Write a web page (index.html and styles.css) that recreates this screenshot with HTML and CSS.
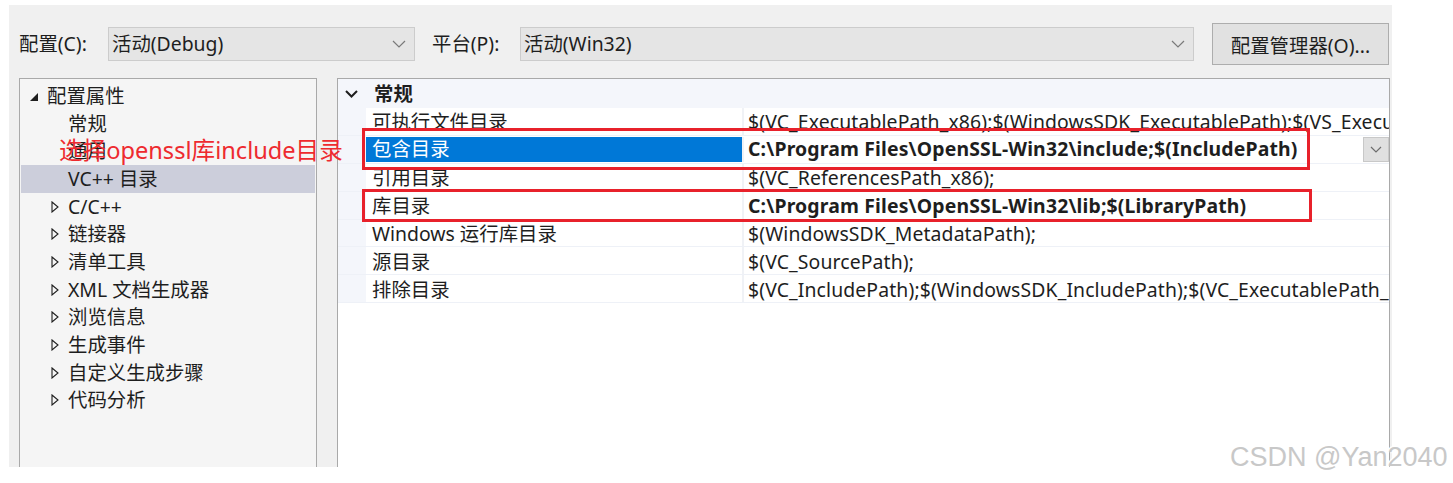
FILE: index.html
```html
<!DOCTYPE html>
<html lang="zh-CN">
<head>
<meta charset="utf-8">
<title>属性页</title>
<link rel="stylesheet" href="styles.css">
</head>
<body>
<div class="window">
  <div class="toolbar">
    <span class="tb-label tb-label-1">配置(C):</span>
    <div class="combo combo-1">
      <span class="combo-text">活动(Debug)</span>
      <svg class="chev" width="14" height="8" viewBox="0 0 14 8"><polyline points="1,1 7,7 13,1" fill="none" stroke="#7a7a7a" stroke-width="1.2"/></svg>
    </div>
    <span class="tb-label tb-label-2">平台(P):</span>
    <div class="combo combo-2">
      <span class="combo-text">活动(Win32)</span>
      <svg class="chev" width="14" height="8" viewBox="0 0 14 8"><polyline points="1,1 7,7 13,1" fill="none" stroke="#7a7a7a" stroke-width="1.2"/></svg>
    </div>
    <button class="btn">配置管理器(O)...</button>
  </div>

  <div class="panels">
    <div class="tree">
      <div class="tree-row lvl0">
        <svg class="tri" width="8" height="8" viewBox="0 0 8 8"><polygon points="0,8 8,8 8,0" fill="#1e1e1e"/></svg>
        <span>配置属性</span>
      </div>
      <div class="tree-row leaf"><span>常规</span></div>
      <div class="tree-row leaf"><span>通用</span></div>
      <div class="tree-row leaf selected"><span>VC++ 目录</span></div>
      <div class="tree-row exp"><svg class="tri-o" width="8" height="12" viewBox="0 0 8 12"><polygon points="1,1 7,6 1,11" fill="none" stroke="#1e1e1e" stroke-width="1.1"/></svg><span>C/C++</span></div>
      <div class="tree-row exp"><svg class="tri-o" width="8" height="12" viewBox="0 0 8 12"><polygon points="1,1 7,6 1,11" fill="none" stroke="#1e1e1e" stroke-width="1.1"/></svg><span>链接器</span></div>
      <div class="tree-row exp"><svg class="tri-o" width="8" height="12" viewBox="0 0 8 12"><polygon points="1,1 7,6 1,11" fill="none" stroke="#1e1e1e" stroke-width="1.1"/></svg><span>清单工具</span></div>
      <div class="tree-row exp"><svg class="tri-o" width="8" height="12" viewBox="0 0 8 12"><polygon points="1,1 7,6 1,11" fill="none" stroke="#1e1e1e" stroke-width="1.1"/></svg><span>XML 文档生成器</span></div>
      <div class="tree-row exp"><svg class="tri-o" width="8" height="12" viewBox="0 0 8 12"><polygon points="1,1 7,6 1,11" fill="none" stroke="#1e1e1e" stroke-width="1.1"/></svg><span>浏览信息</span></div>
      <div class="tree-row exp"><svg class="tri-o" width="8" height="12" viewBox="0 0 8 12"><polygon points="1,1 7,6 1,11" fill="none" stroke="#1e1e1e" stroke-width="1.1"/></svg><span>生成事件</span></div>
      <div class="tree-row exp"><svg class="tri-o" width="8" height="12" viewBox="0 0 8 12"><polygon points="1,1 7,6 1,11" fill="none" stroke="#1e1e1e" stroke-width="1.1"/></svg><span>自定义生成步骤</span></div>
      <div class="tree-row exp"><svg class="tri-o" width="8" height="12" viewBox="0 0 8 12"><polygon points="1,1 7,6 1,11" fill="none" stroke="#1e1e1e" stroke-width="1.1"/></svg><span>代码分析</span></div>
    </div>

    <div class="grid">
      <div class="grid-head">
        <svg class="head-chev" width="13" height="8" viewBox="0 0 13 8"><polyline points="1,1 6.5,6.5 12,1" fill="none" stroke="#1e1e1e" stroke-width="2"/></svg>
        <span class="head-text">常规</span>
      </div>
      <div class="rows">
        <div class="prow">
          <div class="gutter"></div>
          <div class="pname">可执行文件目录</div>
          <div class="pval">$(VC_ExecutablePath_x86);$(WindowsSDK_ExecutablePath);$(VS_ExecutablePath);$(MSBuild_ExecutablePath);$(SystemRoot)</div>
        </div>
        <div class="prow">
          <div class="gutter"></div>
          <div class="pname active">包含目录</div>
          <div class="pval bold with-btn">
            <span class="val-text">C:\Program Files\OpenSSL-Win32\include;$(IncludePath)</span>
            <span class="drop-btn"><svg width="12" height="7" viewBox="0 0 12 7"><polyline points="1,1 6,6 11,1" fill="none" stroke="#6d6d6d" stroke-width="1.2"/></svg></span>
          </div>
        </div>
        <div class="prow">
          <div class="gutter"></div>
          <div class="pname">引用目录</div>
          <div class="pval">$(VC_ReferencesPath_x86);</div>
        </div>
        <div class="prow">
          <div class="gutter"></div>
          <div class="pname">库目录</div>
          <div class="pval bold">C:\Program Files\OpenSSL-Win32\lib;$(LibraryPath)</div>
        </div>
        <div class="prow">
          <div class="gutter"></div>
          <div class="pname">Windows 运行库目录</div>
          <div class="pval">$(WindowsSDK_MetadataPath);</div>
        </div>
        <div class="prow">
          <div class="gutter"></div>
          <div class="pname">源目录</div>
          <div class="pval">$(VC_SourcePath);</div>
        </div>
        <div class="prow">
          <div class="gutter"></div>
          <div class="pname">排除目录</div>
          <div class="pval">$(VC_IncludePath);$(WindowsSDK_IncludePath);$(VC_ExecutablePath_x86);$(WindowsSDK_ExecutablePath)</div>
        </div>
      </div>
      <div class="hl-box hl-1"></div>
      <div class="hl-box hl-2"></div>
    </div>
  </div>

  <div class="annotation">选择openssl库include目录</div>
</div>
<div class="watermark">CSDN @Yan2040</div>
</body>
</html>
```

FILE: styles.css
```css
* { box-sizing: border-box; }

html, body {
  margin: 0;
  padding: 0;
  background: #ffffff;
}

body {
  width: 1453px;
  height: 483px;
  overflow: hidden;
  font-family: "Noto Sans", "Noto Sans CJK SC", sans-serif;
  font-size: 19.4px;
  color: #1e1e1e;
  padding: 5px 0 0 9px;
}

.window {
  position: relative;
  width: 1383px;
  height: 462px;
  background: #f0f0f0;
  padding: 18px 0 0 10px;
  display: flex;
  flex-direction: column;
}

/* toolbar */
.toolbar {
  display: flex;
  align-items: center;
  height: 42px;
}

.tb-label {
  line-height: 24px;
  white-space: nowrap;
}
.tb-label-1 { width: 89px; }
.tb-label-2 { width: 88px; margin-left: 17px; }

.combo {
  height: 34px;
  background: #e5e5e5;
  border: 1px solid #cccccc;
  display: flex;
  align-items: center;
  justify-content: space-between;
  padding: 0 8px 0 3px;
}
.combo-1 { width: 307px; }
.combo-2 { width: 674px; }
.combo-text { line-height: 24px; }
.chev { display: block; }

.btn {
  margin-left: 18px;
  width: 177px;
  height: 42px;
  background: #e1e1e1;
  border: 1px solid #adadad;
  font-family: "Noto Sans", "Noto Sans CJK SC", sans-serif;
  font-size: 19.4px;
  color: #1e1e1e;
  padding: 0;
}

/* panels */
.panels {
  display: flex;
  margin-top: 13px;
  flex: 1;
  min-height: 0;
}

.tree {
  width: 298px;
  background: #f5f5f5;
  border: 1px solid #a9a9a9;
  border-bottom: none;
  padding: 3px 1px 0 1px;
  display: flex;
  flex-direction: column;
}

.tree-row {
  height: 27.7px;
  display: flex;
  align-items: center;
  white-space: nowrap;
  line-height: 24px;
}
.tree-row.lvl0 { padding-left: 9px; }
.tree-row.lvl0 .tri { margin-right: 9px; margin-top: 2px; }
.tree-row.leaf { padding-left: 47px; }
.tree-row.exp { padding-left: 30px; }
.tree-row.exp .tri-o { margin-right: 9px; }
.tree-row.selected { background: #cccedb; }

.grid {
  position: relative;
  margin-left: 20px;
  width: 1053px;
  background: #ffffff;
  border: 1px solid #a9a9a9;
  border-bottom: none;
  overflow: hidden;
}

.grid-head {
  height: 29px;
  background: #f4f6fb;
  display: flex;
  align-items: center;
  padding-left: 7px;
}
.head-chev { margin-right: 16px; margin-top: 1px; }
.head-text { font-weight: 700; line-height: 24px; }

.rows {
  display: flex;
  flex-direction: column;
}

.prow {
  height: 27.9px;
  display: grid;
  grid-template-columns: 28px 378px 1fr;
  border-bottom: 1px solid #eef1f7;
}

.gutter { background: #f4f6fb; }

.pname {
  padding-left: 6px;
  padding-top: 2px;
  display: flex;
  align-items: center;
  white-space: nowrap;
  line-height: 24px;
  border-right: 2px solid #f0f2f6;
}
.pname.active {
  background: #0078d7;
  color: #ffffff;
  margin: 1px 0;
  padding-top: 0;
}

.pval {
  padding-left: 4px;
  padding-top: 2px;
  display: flex;
  align-items: center;
  white-space: nowrap;
  overflow: hidden;
  line-height: 24px;
  letter-spacing: 0.12px;
}
.pval.bold { font-weight: 700; letter-spacing: 0.16px; }
.pval.with-btn { justify-content: space-between; padding-right: 0; padding-top: 0; }

.drop-btn {
  width: 26px;
  height: 25px;
  background: #e0e0e0;
  border: 1px solid #c8c8c8;
  display: flex;
  align-items: center;
  justify-content: center;
  font-weight: 400;
  flex: none;
}

.hl-box {
  position: absolute;
  border: 3px solid #e8212b;
  pointer-events: none;
}
.hl-1 { left: 24px; top: 49px; width: 948px; height: 42px; }
.hl-2 { left: 24px; top: 110px; width: 950px; height: 33px; }

.annotation {
  position: absolute;
  left: 50px;
  top: 130px;
  font-size: 23.6px;
  line-height: 30px;
  color: #ee2a2f;
  white-space: nowrap;
  font-family: "Noto Sans", "Noto Sans CJK SC", sans-serif;
}

.watermark {
  position: absolute;
  left: 1230px;
  top: 441px;
  font-family: "Liberation Sans", Arial, sans-serif;
  font-size: 27px;
  line-height: 32px;
  color: #c8c8c8;
  text-shadow: 1px 1px 1px #ffffff, -1px -1px 0 #ffffff;
  white-space: nowrap;
}
```
